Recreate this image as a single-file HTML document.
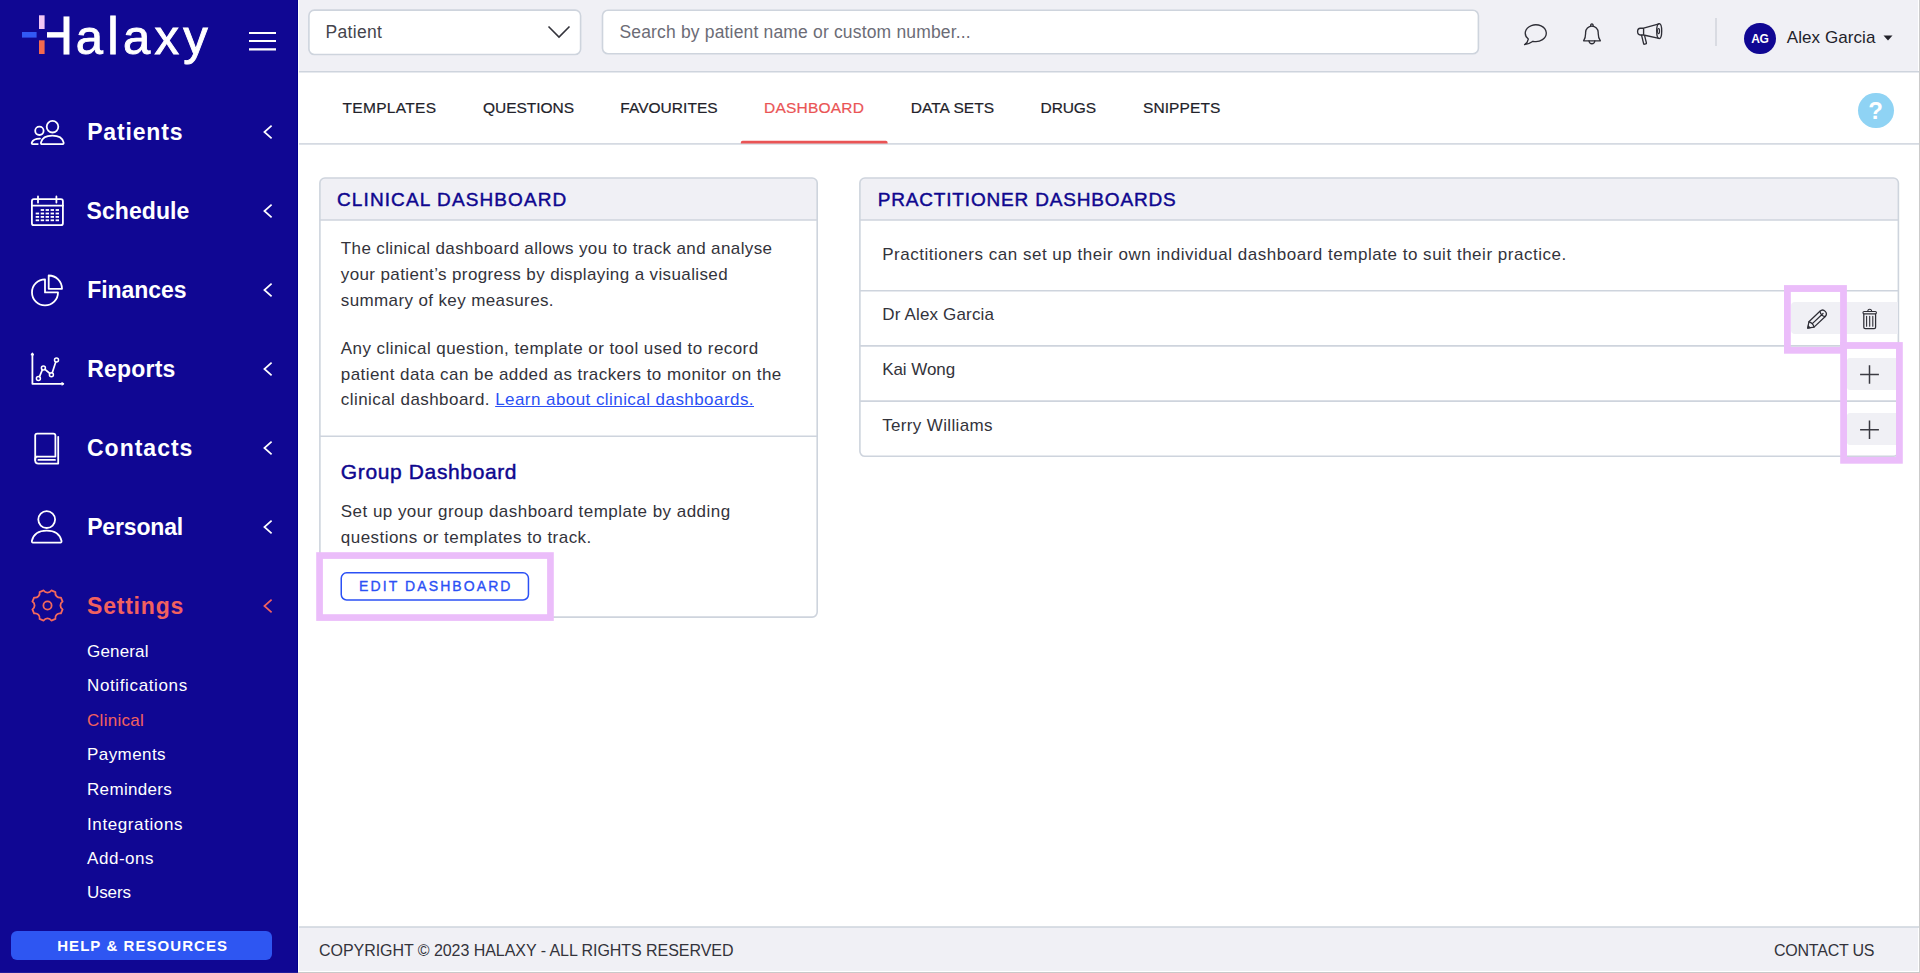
<!DOCTYPE html>
<html lang="en">
<head>
<meta charset="utf-8">
<title>Halaxy - Clinical Dashboard</title>
<style>
*{box-sizing:border-box;margin:0;padding:0}
html,body{width:1920px;height:973px;overflow:hidden;background:#fff;font-family:"Liberation Sans",Arial,sans-serif;color:#2b2b33}
.abs{position:absolute}
.t{position:absolute;white-space:nowrap;line-height:1}
/* sidebar */
#side{position:absolute;left:0;top:0;width:298px;height:973px;background:#100793;border-right:1px solid #02008a;color:#fff}
.mi{position:absolute;left:86px;font-weight:bold;font-size:23px;line-height:28px;white-space:nowrap;letter-spacing:.6px}
.chev{position:absolute;left:262px;width:11px;height:16px}
.ico{position:absolute;left:28px;width:38px;height:38px}
.sub{position:absolute;left:86px;font-size:17px;line-height:22px;white-space:nowrap}
.coral{color:#f2615f}
#helpbtn{position:absolute;left:11.4px;top:930.6px;width:261px;height:29px;border-radius:6px;background:#2e56f2;color:#fff;font-weight:bold;font-size:15px;letter-spacing:1.6px;text-align:center;line-height:29px}
/* header */
#top{position:absolute;left:299px;top:0;width:1619px;height:72px;background:#f0f0f5}
.inp{position:absolute;background:#fff;border:1px solid #d4d4dc;border-radius:6px}
/* tabs */
#tabs{position:absolute;left:299px;top:73px;width:1619px;height:72px;background:#fff}
.tab{position:absolute;top:27px;font-size:15.5px;line-height:16px;color:#22222a;white-space:nowrap;-webkit-text-stroke:.2px currentColor}
/* cards */
.card{position:absolute}
.chead{position:absolute;left:0;top:0;right:0;height:42px}
.ctitle{position:absolute;top:11px;font-size:19px;line-height:20px;color:#0f078f;white-space:nowrap;letter-spacing:.3px;-webkit-text-stroke:.45px #0f078f}
.p{position:absolute;font-size:17px;line-height:25.8px;color:#33333b;white-space:nowrap}
.hr{position:absolute;left:0;right:0;height:1px;background:#d3d8df}
.hl{position:absolute;border:6.7px solid #ebbdfa}
.gbtn{position:absolute;background:#f0f0f5}
/* footer */
#foot{position:absolute;left:299px;top:927px;width:1619px;height:44px;background:#f0f0f5;font-size:16px;color:#33333b}
</style>
</head>
<body>
<div id="side">
  <svg class="abs" style="left:0;top:0" width="298" height="80" viewBox="0 0 298 80">
    <text x="35" y="54" fill="#fff" stroke="#fff" stroke-width="0.9" font-family="Liberation Sans, sans-serif"><tspan font-size="53">H</tspan><tspan font-size="49" dx="2.4" letter-spacing="4.3">a</tspan><tspan font-size="51.5" letter-spacing="4.3">l</tspan><tspan font-size="49" letter-spacing="4.3">axy</tspan></text>
    <rect x="34" y="10" width="13" height="50" fill="#100793"/>
    <rect x="39" y="15.3" width="5.6" height="13.7" fill="#f3c6f5"/>
    <rect x="39" y="40.3" width="5.6" height="13.7" fill="#f4694f"/>
    <rect x="22" y="32" width="14.6" height="5.6" fill="#3259f5"/>
  </svg>
  <svg class="abs" style="left:249px;top:31px" width="28" height="20" viewBox="0 0 28 20"><path d="M0 2H27M0 10H27M0 18.4H27" stroke="#fff" stroke-width="2.2" fill="none"/></svg>
<svg class="abs" style="left:0;top:0" width="298" height="973" viewBox="0 0 298 973" fill="none" stroke="#fff" stroke-width="1.8" stroke-linecap="round" stroke-linejoin="round">
    <!-- patients -->
    <circle cx="52.5" cy="126.7" r="5.8"/>
    <circle cx="39.4" cy="130.8" r="4.2"/>
    <path d="M41.6 144.1Q40.8 144.1 41 142.4Q42.6 135.6 52.3 135.6Q62 135.6 63.6 142.4Q63.8 144.1 62.8 144.1Z"/>
    <path d="M40 138.6Q33.2 138.6 31.8 142.6Q31.4 144.1 32.8 144.1H37.8"/>
    <!-- schedule -->
    <rect x="31.9" y="199.2" width="31" height="26" rx="2"/>
    <path d="M31.9 205.6H62.9M38 196.4V202.6M56.4 196.4V202.6"/>
    <g stroke="none"><rect x="40.7" y="209.1" width="3.4" height="1.8" fill="#fff"/><rect x="45.6" y="209.1" width="3.4" height="1.8" fill="#fff"/><rect x="50.6" y="209.1" width="3.4" height="1.8" fill="#fff"/><rect x="55.6" y="209.1" width="3.4" height="1.8" fill="#fff"/><rect x="35.7" y="212.6" width="3.4" height="1.8" fill="#fff"/><rect x="40.7" y="212.6" width="3.4" height="1.8" fill="#fff"/><rect x="45.6" y="212.6" width="3.4" height="1.8" fill="#fff"/><rect x="50.6" y="212.6" width="3.4" height="1.8" fill="#fff"/><rect x="55.6" y="212.6" width="3.4" height="1.8" fill="#fff"/><rect x="35.7" y="216.0" width="3.4" height="1.8" fill="#fff"/><rect x="40.7" y="216.0" width="3.4" height="1.8" fill="#fff"/><rect x="45.6" y="216.0" width="3.4" height="1.8" fill="#fff"/><rect x="50.6" y="216.0" width="3.4" height="1.8" fill="#fff"/><rect x="55.6" y="216.0" width="3.4" height="1.8" fill="#fff"/><rect x="35.7" y="219.4" width="3.4" height="1.8" fill="#fff"/><rect x="40.7" y="219.4" width="3.4" height="1.8" fill="#fff"/><rect x="45.6" y="219.4" width="3.4" height="1.8" fill="#fff"/><rect x="50.6" y="219.4" width="3.4" height="1.8" fill="#fff"/><rect x="55.6" y="219.4" width="3.4" height="1.8" fill="#fff"/></g>
    <!-- finances -->
    <path d="M45 279.4V292.4H58A13 13 0 1 1 45 279.4Z"/>
    <path d="M48.7 275.5V288.8H62A13.3 13.3 0 0 0 48.7 275.5Z"/>
    <!-- reports -->
    <path d="M32.4 354V383.8H63"/>
    <path d="M31.3 354.8L32.4 353.2L33.5 354.8M62 382.7L63.600 383.8L62 384.9" stroke-width="1.2"/>
    <path d="M39.5 376.6L42.4 369.7M45 369.3L49.9 373.5M52.2 373L55.8 361.8" stroke-width="1.7"/>
    <circle cx="38.4" cy="378.4" r="2" stroke-width="1.5"/><circle cx="43.4" cy="367.9" r="2" stroke-width="1.5"/><circle cx="51.4" cy="374.8" r="2" stroke-width="1.5"/><circle cx="56.5" cy="360" r="2" stroke-width="1.5"/>
    <!-- contacts -->
    <path d="M36.8 456.6H55.4V435.6Q55.4 433.6 53.4 433.6H37.2Q35.2 433.6 35.2 435.6V460.4Q35.2 463.6 38.4 463.6H58.2V436.8"/>
    <path d="M36.8 456.6Q35.2 456.8 35.2 460"/>
    <path d="M38.4 459.9H55"/>
    <!-- personal -->
    <circle cx="46.7" cy="519.6" r="8.4"/>
    <path d="M33 542.6Q31.6 542.6 31.9 540.8Q34.4 530.7 46.7 530.7Q59 530.7 61.5 540.8Q61.8 542.6 60.4 542.6Z"/>
    <!-- settings -->
    <path d="M62.60 609.41L60.94 613.42A4.6 4.6 0 0 0 55.42 618.94L51.41 620.60A4.6 4.6 0 0 0 43.59 620.60L39.58 618.94A4.6 4.6 0 0 0 34.06 613.42L32.40 609.41A4.6 4.6 0 0 0 32.40 601.59L34.06 597.58A4.6 4.6 0 0 0 39.58 592.06L43.59 590.40A4.6 4.6 0 0 0 51.41 590.40L55.42 592.06A4.6 4.6 0 0 0 60.94 597.58L62.60 601.59A4.6 4.6 0 0 0 62.60 609.41Z" stroke="#f4695c" stroke-width="1.8" fill="none" stroke-linejoin="round"/><circle cx="47.5" cy="605.5" r="4.1" stroke="#f4695c" stroke-width="1.8" fill="none"/>
  </svg>
  <div class="mi" id="m0" style="top:117.8px;left:87.2px;letter-spacing:0.83px">Patients</div>
  <svg class="chev" style="top:124px" viewBox="0 0 11 16"><path d="M9.6 1.6L2.4 8L9.6 14.4" stroke="#fff" stroke-width="1.7" fill="none"/></svg>
  <div class="mi" id="m1" style="top:196.8px;left:86.6px;letter-spacing:0.06px">Schedule</div>
  <svg class="chev" style="top:203px" viewBox="0 0 11 16"><path d="M9.6 1.6L2.4 8L9.6 14.4" stroke="#fff" stroke-width="1.7" fill="none"/></svg>
  <div class="mi" id="m2" style="top:275.8px;left:87.2px;letter-spacing:-0.06px">Finances</div>
  <svg class="chev" style="top:282px" viewBox="0 0 11 16"><path d="M9.6 1.6L2.4 8L9.6 14.4" stroke="#fff" stroke-width="1.7" fill="none"/></svg>
  <div class="mi" id="m3" style="top:354.8px;left:87.2px;letter-spacing:0.20px">Reports</div>
  <svg class="chev" style="top:361px" viewBox="0 0 11 16"><path d="M9.6 1.6L2.4 8L9.6 14.4" stroke="#fff" stroke-width="1.7" fill="none"/></svg>
  <div class="mi" id="m4" style="top:433.8px;left:87.0px;letter-spacing:1.00px">Contacts</div>
  <svg class="chev" style="top:440px" viewBox="0 0 11 16"><path d="M9.6 1.6L2.4 8L9.6 14.4" stroke="#fff" stroke-width="1.7" fill="none"/></svg>
  <div class="mi" id="m5" style="top:512.8px;left:87.2px;letter-spacing:-0.17px">Personal</div>
  <svg class="chev" style="top:519px" viewBox="0 0 11 16"><path d="M9.6 1.6L2.4 8L9.6 14.4" stroke="#fff" stroke-width="1.7" fill="none"/></svg>
  <div class="mi coral" id="m6" style="top:591.8px;left:87.0px;letter-spacing:0.79px">Settings</div>
  <svg class="chev" style="top:598px" viewBox="0 0 11 16"><path d="M9.6 1.6L2.4 8L9.6 14.4" stroke="#f2615f" stroke-width="1.7" fill="none"/></svg>
  <div class="sub" id="s0" style="top:640.7px;left:87.0px;letter-spacing:0.17px">General</div>
  <div class="sub" id="s1" style="top:675.4px;left:87.0px;letter-spacing:0.63px">Notifications</div>
  <div class="sub coral" id="s2" style="top:709.9px;left:87.0px;letter-spacing:0.29px">Clinical</div>
  <div class="sub" id="s3" style="top:744.4px;left:87.0px;letter-spacing:0.42px">Payments</div>
  <div class="sub" id="s4" style="top:779.0px;left:87.0px;letter-spacing:0.33px">Reminders</div>
  <div class="sub" id="s5" style="top:813.7px;left:87.0px;letter-spacing:0.60px">Integrations</div>
  <div class="sub" id="s6" style="top:848.2px;left:87.0px;letter-spacing:0.55px">Add-ons</div>
  <div class="sub" id="s7" style="top:882.4px;left:87.0px;letter-spacing:-0.08px">Users</div>
  <div id="helpbtn"></div>
  <span class="t" id="helpt" style="left:57.2px;top:938.0px;font-weight:bold;font-size:15px;letter-spacing:1.06px">HELP &amp; RESOURCES</span>
</div>
<div id="top">
  <svg class="abs" style="left:0;top:0" width="1621" height="74" viewBox="299 0 1621 74" fill="#fff" stroke="#ced4dd" stroke-width="1.6">
    <rect x="308.9" y="10.15" width="271.7" height="44.35" rx="5.5"/>
    <rect x="602.5" y="10.2" width="875.9" height="43.5" rx="5.5"/>
    <path d="M299 71.8H1920"/>
  </svg>
  <span class="t" id="tPatient" style="left:26.5px;top:24.3px;font-size:17.5px;color:#44444c;letter-spacing:0.33px">Patient</span>
  <svg class="abs" style="left:248px;top:25px" width="24" height="14" viewBox="0 0 24 14"><path d="M1.5 1.5L12 12L22.5 1.5" stroke="#33333b" stroke-width="1.6" fill="none"/></svg>
  <span class="t" id="tSearch" style="left:320.4px;top:23.6px;font-size:17.5px;color:#6c6c76;letter-spacing:0.17px">Search by patient name or custom number...</span>
  <svg class="abs" style="left:1201px;top:0" width="200" height="71" viewBox="1500 0 200 71" fill="none" stroke="#2e2e36" stroke-width="1.35" stroke-linejoin="round" stroke-linecap="round">
    <path d="M1528.3 39.1A10.5 8.4 0 1 1 1533 41.3Q1529 44.2 1524.6 44.6Q1527.8 42.6 1528.3 39.1Z"/>
    <path d="M1583.6 40.8H1600.4Q1598.2 38 1598.2 33.6V32.4A6.3 6.3 0 0 0 1585.6 32.4V33.6Q1585.600 38 1583.6 40.8Z"/>
    <path d="M1590.6 26.2Q1590.6 23.8 1591.9 23.8Q1593.2 23.8 1593.2 26.2M1589 41A2.95 3.4 0 0 0 1594.8 41"/>
    <path d="M1643.6 28.2H1640.400Q1637.6 28.2 1637.6 31.6Q1637.6 35 1640.4 35H1643.6ZM1643.6 28.2L1659 23.8M1643.6 35L1659 38.4"/>
    <ellipse cx="1659.2" cy="31.1" rx="2.5" ry="7.5"/>
    <ellipse cx="1658.6" cy="31.1" rx="1" ry="2.6" stroke-width="1.1"/>
    <path d="M1641.6 35.4L1643.600 43.6Q1643.8 44.4 1644.6 44.2L1645.8 43.9Q1646.6 43.7 1646.4 42.9L1644.6 35.6"/>
  </svg>
  <div class="abs" style="left:1416px;top:18px;width:2px;height:28px;background:#d9dbe2"></div>
  <div class="abs" style="left:1445.2px;top:22.8px;width:31.4px;height:30.8px;border-radius:50%;background:#100793"></div>
  <span class="t" id="tAG" style="left:1452.3px;top:32.5px;font-size:12px;font-weight:bold;color:#fff;letter-spacing:-0.40px">AG</span>
  <span class="t" id="tAlex" style="left:1487.8px;top:29.3px;font-size:17px;color:#22222a;letter-spacing:0.07px">Alex Garcia</span>
  <svg class="abs" style="left:1584px;top:35px" width="10" height="6" viewBox="0 0 10 6"><path d="M0.5 0.5H9.5L5 5.5Z" fill="#22222a"/></svg>
</div>
<div id="tabs">
  <span class="tab" id="tab0" style="left:43.5px;top:26.7px;letter-spacing:0.31px">TEMPLATES</span>
  <span class="tab" id="tab1" style="left:184.0px;top:26.7px;letter-spacing:-0.03px">QUESTIONS</span>
  <span class="tab" id="tab2" style="left:321.3px;top:26.7px;letter-spacing:0.03px">FAVOURITES</span>
  <span class="tab" id="tab3" style="left:465.1px;color:#ea5455;top:26.7px;letter-spacing:0.20px">DASHBOARD</span>
  <span class="tab" id="tab4" style="left:611.8px;top:26.7px;letter-spacing:0.04px">DATA SETS</span>
  <span class="tab" id="tab5" style="left:741.6px;top:26.7px;letter-spacing:-0.15px">DRUGS</span>
  <span class="tab" id="tab6" style="left:844.0px;top:26.7px;letter-spacing:0.09px">SNIPPETS</span>
  <svg class="abs" style="left:0;top:60px" width="1621" height="14" viewBox="299 133 1621 14"><path d="M299 143.95H1920" stroke="#d5dae2" stroke-width="1.7"/><path d="M740.8 143.6V142.600Q740.8 140.8 742.6 140.8H885.8Q887.6 140.8 887.6 142.6V143.600Z" fill="#ea5455"/></svg>
  <div class="abs" style="left:1559.4px;top:20px;width:35.2px;height:35px;border-radius:50%;background:#8fd3f4"></div>
  <span class="t" id="tQ" style="left:1559px;top:26px;width:35px;text-align:center;font-size:24px;font-weight:bold;color:#fff">?</span>
</div>
<svg class="abs" style="left:0;top:0" width="1920" height="973" viewBox="0 0 1920 973" fill="none" stroke="#ced4dd" stroke-width="1.6">
  <path d="M319.9 220V183Q319.9 178 324.9 178H812.2Q817.2 178 817.2 183V220Z" fill="#f0f0f5" stroke="none"/>
  <path d="M859.9 220V183Q859.9 178 864.9 178H1893.4Q1898.4 178 1898.4 183V220Z" fill="#f0f0f5" stroke="none"/>
  <rect x="319.9" y="178" width="497.3" height="439.1" rx="5"/>
  <rect x="859.9" y="178" width="1038.5" height="278.3" rx="5"/>
  <path d="M319.9 220H817.2M319.9 436.2H817.2M859.9 220H1898.4M859.9 290.7H1898.4M859.9 345.9H1898.4M859.9 401.100H1898.4"/>
  <rect x="341.25" y="572.85" width="187.2" height="27.1" rx="5.4" stroke="#2b50f5" stroke-width="1.5"/>
</svg>
<div class="card" style="left:320px;top:179px;width:498px;height:438px">
  <div class="chead"><span class="ctitle" id="ct1" style="left:17.0px;top:10.8px;letter-spacing:1.11px">CLINICAL DASHBOARD</span></div>
  <div class="p" id="p1" style="left:20.8px;top:57.2px;letter-spacing:0.38px">The clinical dashboard allows you to track and analyse<br>your patient’s progress by displaying a visualised<br>summary of key measures.</div>
  <div class="p" id="p2" style="left:20.8px;top:156.9px;letter-spacing:0.44px">Any clinical question, template or tool used to record<br>patient data can be added as trackers to monitor on the<br>clinical dashboard. <span style="color:#2b50f5;text-decoration:underline">Learn about clinical dashboards.</span></div>
  <div class="t" id="gd" style="left:20.8px;top:282.0px;font-size:21px;color:#0f078f;-webkit-text-stroke:.45px #0f078f;letter-spacing:0.63px">Group Dashboard</div>
  <div class="p" id="p3" style="left:20.8px;top:319.8px;letter-spacing:0.46px">Set up your group dashboard template by adding<br>questions or templates to track.</div>
  <span class="t" id="edb" style="-webkit-text-stroke:.35px #2b50f5;left:39.1px;top:400.2px;font-size:14px;letter-spacing:2.09px;color:#2b50f5">EDIT DASHBOARD</span>
</div>
<div class="card" style="left:861px;top:179px;width:1037px;height:278px">
  <div class="chead"><span class="ctitle" id="ct2" style="left:16.7px;top:10.8px;letter-spacing:0.83px">PRACTITIONER DASHBOARDS</span></div>
  <div class="p" id="p4" style="left:21.2px;top:63.0px;letter-spacing:0.52px">Practitioners can set up their own individual dashboard template to suit their practice.</div>
  <div class="p" id="r1" style="left:21.2px;top:123.0px;letter-spacing:0.17px">Dr Alex Garcia</div>
  <div class="p" id="r2" style="left:21.2px;top:178.1px;letter-spacing:-0.06px">Kai Wong</div>
  <div class="p" id="r3" style="left:21.2px;top:233.8px;letter-spacing:0.35px">Terry Williams</div>
</div>
<div class="gbtn" style="left:1791.4px;top:302.2px;width:106.2px;height:32px;border-radius:4px 0 0 4px"></div>
<div class="gbtn" style="left:1847.2px;top:357.6px;width:50.4px;height:32px;border-radius:3px 0 0 3px"></div>
<div class="gbtn" style="left:1847.2px;top:412.9px;width:50.4px;height:32px;border-radius:3px 0 0 3px"></div>
<svg class="abs" style="left:1790px;top:295px" width="110" height="160" viewBox="1790 295 110 160" fill="none" stroke="#2e2e36" stroke-width="1.25" stroke-linejoin="round" stroke-linecap="round">
  <g transform="translate(1817.1 319.1) rotate(-43.6)">
    <path d="M-13 0L-7.8 -3.7H7.4Q11.2 -3.7 11.2 0Q11.2 3.7 7.4 3.7H-7.8Z"/>
    <path d="M-7.800 -3.7Q-5.4 0 -7.8 3.7M-6.2 0H8.2M7.4 -3.7Q5.200 0 7.4 3.7"/>
    <path d="M-13 0L-10.8 -1.5V1.5Z" fill="#2e2e36" stroke-width=".6"/>
  </g>
  <rect x="1863" y="311.5" width="13.4" height="2.4" rx="1.1" stroke-width="1.1"/>
  <path d="M1867.8 311.3Q1867.8 309.300 1869.7 309.3Q1871.6 309.3 1871.6 311.3" stroke-width="1.1"/>
  <path d="M1863.8 314.2V327.2Q1863.8 328.6 1865.200 328.6H1874.2Q1875.6 328.6 1875.6 327.2V314.2"/>
  <path d="M1866.6 316.200V326.2M1869.7 316.200V326.2M1872.8 316.200V326.2" stroke-width="1.1"/>
  <path d="M1860.100 374.5H1878.9M1869.5 365.300V383.7M1860.100 429.8H1878.9M1869.5 420.600V439" stroke-width="1.5" stroke="#3a3a42" stroke-linecap="butt"/>
</svg>
<svg class="abs" style="left:0;top:0" width="1920" height="973" viewBox="0 0 1920 973" fill="none" stroke="#ebbdfa">
  <rect x="319.55" y="555.55" width="230.90" height="62.00" stroke-width="6.7"/>
  <rect x="1787.40" y="288.50" width="56.10" height="61.80" stroke-width="6.8"/>
  <rect x="1843.60" y="345.50" width="55.80" height="114.80" stroke-width="6.8"/>
</svg>
<div id="foot">
  <svg class="abs" style="left:0;top:-2px" width="1621" height="4" viewBox="299 925 1621 4"><path d="M299 927H1920" stroke="#ced4dd" stroke-width="1.7"/></svg>
  <span class="t" id="fcopy" style="left:20.0px;top:16.0px;letter-spacing:-0.05px">COPYRIGHT © 2023 HALAXY - ALL RIGHTS RESERVED</span>
  <span class="t" id="fcontact" style="left:1475.0px;top:15.5px;letter-spacing:-0.23px">CONTACT US</span>
</div>
<div class="abs" style="left:1919px;top:0;width:1px;height:973px;background:#cbcbcb"></div>
<div class="abs" style="left:298px;top:972px;width:1622px;height:1px;background:#c9c9c9"></div>
<div class="abs" style="left:0;top:972px;width:298px;height:1px;background:#201b9b"></div>
</body>
</html>
